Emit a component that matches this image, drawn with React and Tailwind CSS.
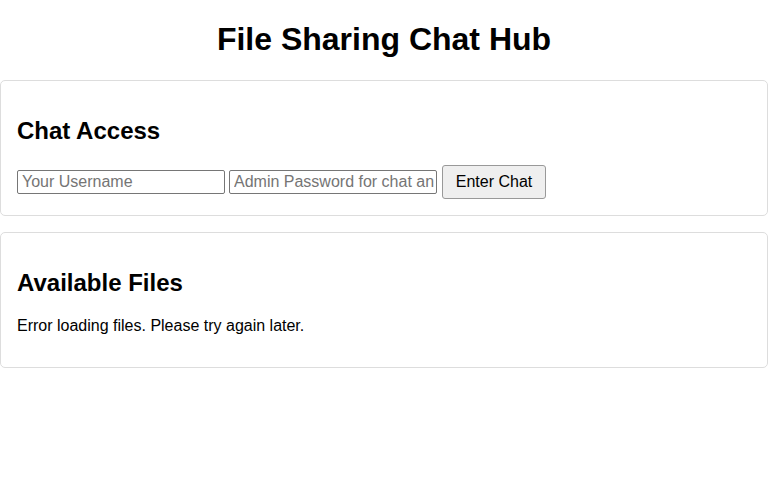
import React from "react";

const App = () => {
  return (
    <div className="bg-white text-black font-['Liberation_Sans',Arial,sans-serif] text-base min-h-screen">
      <h1 className="text-[32px] leading-[37px] font-bold text-center pt-[21px] pb-[22px]">
        File Sharing Chat Hub
      </h1>

      <div className="border border-[#dddddd] rounded-[5px] p-4">
        <h2 className="text-2xl leading-[28px] font-bold mt-5 mb-5">Chat Access</h2>
        <div className="flex items-center h-[34px]">
          <input
            type="text"
            placeholder="Your Username"
            className="w-[208px] h-[24px] border border-[#767676] rounded-[2px] pl-[4px] pr-[2px] text-base leading-[18px] placeholder:text-[#757575]"
          />
          <input
            type="password"
            placeholder="Admin Password for chat and uploads"
            className="w-[208px] h-[24px] ml-1 border border-[#767676] rounded-[2px] pl-[4px] pr-[2px] text-base leading-[18px] placeholder:text-[#757575]"
          />
          <button className="ml-[5px] w-[104px] h-[34px] bg-[#efefef] border border-[#999999] rounded-[3px] text-base text-black">
            Enter Chat
          </button>
        </div>
      </div>

      <div className="border border-[#dddddd] rounded-[5px] p-4 mt-4">
        <h2 className="text-2xl leading-[28px] font-bold mt-5 mb-4">Available Files</h2>
        <p className="leading-[18px] mt-5 mb-4">Error loading files. Please try again later.</p>
      </div>
    </div>
  );
};

export default App;
